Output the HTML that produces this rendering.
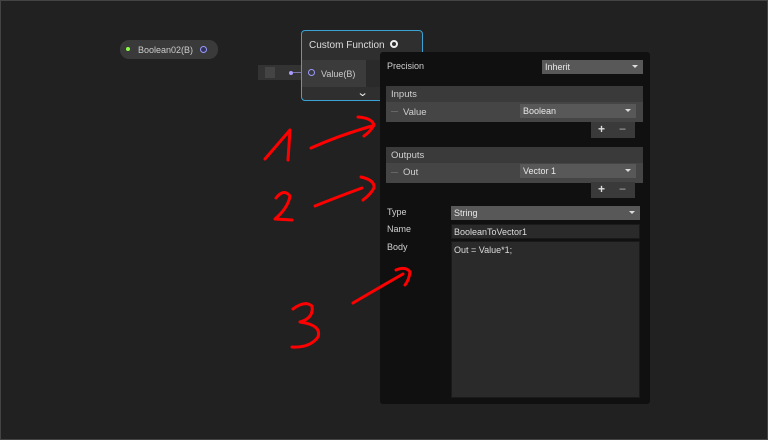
<!DOCTYPE html>
<html><head><style>
*{margin:0;padding:0;box-sizing:border-box}
body{width:768px;height:440px;background:#212121;position:relative;overflow:hidden;font-family:"Liberation Sans",sans-serif;font-size:9px;color:#d0d0d0}
.a{position:absolute}
.dd{position:absolute;background:#585858;color:#e8e8e8;padding:2px 3px;font-size:9px;line-height:10px}
.dd:after{content:"";position:absolute;right:5px;top:5px;border-left:3px solid transparent;border-right:3px solid transparent;border-top:3px solid #ddd}
.pm{position:absolute;background:#3a3a3a;color:#ddd;font-size:12px;font-weight:bold}
</style></head><body>
<div class="a" style="left:0;top:0;width:768px;height:440px;border:1px solid #444"></div>
<div class="a" style="left:120px;top:40px;width:98px;height:19px;background:#3a3a3a;border-radius:9px"></div>
<div class="a" style="left:126px;top:47px;width:4px;height:4px;background:#8f4;border-radius:50%"></div>
<div class="a" style="left:138px;top:45px;color:#ccc">Boolean02(B)</div>
<div class="a" style="left:200px;top:46px;width:7px;height:7px;border:1.5px solid #99f;border-radius:50%;background:#335"></div>
<div class="a" style="left:258px;top:65px;width:44px;height:15px;background:#333"></div>
<div class="a" style="left:265px;top:67px;width:10px;height:11px;background:#444"></div>
<div class="a" style="left:289px;top:71px;width:4px;height:4px;background:#a9f;border-radius:50%"></div>
<div class="a" style="left:293px;top:72px;width:16px;height:1px;background:#77a"></div>
<div class="a" style="left:301px;top:30px;width:122px;height:71px;background:#2f2f2f;border:1.5px solid #3aa3d3;border-radius:4px;overflow:hidden">
 <div class="a" style="left:7px;top:9px;font-size:10px;color:#ddd">Custom Function</div>
 <div class="a" style="left:88px;top:9px;width:8px;height:8px;border:2px solid #eee;border-radius:50%"></div>
 <div class="a" style="left:0;top:29px;width:64px;height:27px;background:#3b3b3b"></div>
 <div class="a" style="left:64px;top:29px;width:60px;height:27px;background:#2a2a2a"></div>
 <div class="a" style="left:6px;top:38px;width:7px;height:7px;border:1.5px solid #99f;border-radius:50%"></div>
 <div class="a" style="left:19px;top:38px;color:#ccc">Value(B)</div>
 <div class="a" style="left:56px;top:55px;font-size:11px;color:#eee;transform:scaleX(1.3)">⌄</div>
</div>
<div class="a" style="left:380px;top:52px;width:270px;height:352px;background:#101010;border-radius:3px"></div>
<div class="a" style="left:387px;top:61px">Precision</div>
<div class="dd" style="left:542px;top:60px;width:101px;height:14px">Inherit</div>
<div class="a" style="left:386px;top:86px;width:257px;height:16px;background:#3a3a3a;padding:3px 5px;font-size:9.5px">Inputs</div>
<div class="a" style="left:386px;top:102px;width:257px;height:20px;background:#454545"></div>
<div class="a" style="left:391px;top:111px;width:7px;height:1px;background:#666"></div>
<div class="a" style="left:403px;top:107px;font-size:9.5px">Value</div>
<div class="dd" style="left:520px;top:104px;width:116px;height:14px">Boolean</div>
<div class="pm" style="left:591px;top:122px;width:44px;height:16px"><span class="a" style="left:7px;top:0">+</span><span class="a" style="left:28px;top:0;color:#888">−</span></div>
<div class="a" style="left:386px;top:147px;width:257px;height:16px;background:#3a3a3a;padding:3px 5px;font-size:9.5px">Outputs</div>
<div class="a" style="left:386px;top:163px;width:257px;height:20px;background:#454545"></div>
<div class="a" style="left:391px;top:172px;width:7px;height:1px;background:#666"></div>
<div class="a" style="left:403px;top:167px;font-size:9.5px">Out</div>
<div class="dd" style="left:520px;top:164px;width:116px;height:14px">Vector 1</div>
<div class="pm" style="left:591px;top:182px;width:44px;height:16px"><span class="a" style="left:7px;top:0">+</span><span class="a" style="left:28px;top:0;color:#888">−</span></div>
<div class="a" style="left:387px;top:207px">Type</div>
<div class="dd" style="left:451px;top:206px;width:189px;height:14px">String</div>
<div class="a" style="left:387px;top:224px">Name</div>
<div class="a" style="left:451px;top:224px;width:189px;height:15px;background:#2a2a2a;border:1px solid #1a1a1a;padding:2px 2px;color:#ddd">BooleanToVector1</div>
<div class="a" style="left:387px;top:242px">Body</div>
<div class="a" style="left:451px;top:241px;width:189px;height:157px;background:#2a2a2a;border:1px solid #1a1a1a;padding:3px 2px;color:#ddd">Out = Value*1;</div>
<svg class="a" style="left:0;top:0" width="768" height="440" fill="none" stroke="#f00" stroke-width="3" stroke-linecap="round" stroke-linejoin="round">
<path d="M265 159 L290 130 L288 160"/>
<path d="M311 148 Q340 135 372 126"/>
<path d="M358 117 Q372 118 374 125 Q370 132 364 136"/>
<path d="M276 198 Q284 188 290 196 Q288 208 275 219 L292 220"/>
<path d="M315 206 Q340 196 362 188"/>
<path d="M361 177 Q375 180 374 188 Q370 195 363 200"/>
<path d="M293 309 Q305 300 312 306 Q314 318 300 322 Q322 325 318 337 Q310 348 292 347"/>
<path d="M353 303 Q375 290 403 274"/>
<path d="M396 270 Q406 266 410 272 Q409 280 405 285"/>
</svg>
</body></html>
